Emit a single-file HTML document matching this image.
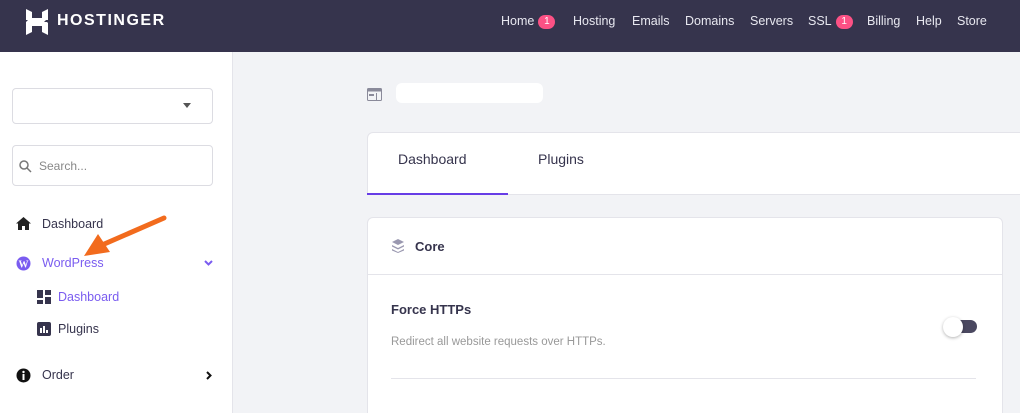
<!DOCTYPE html>
<html style="width:1020px;height:413px;overflow:hidden"><head><style>
*{margin:0;padding:0;box-sizing:border-box}
html,body{width:1020px;height:413px;overflow:hidden}
body{background:#f2f3f6;font-family:"Liberation Sans",sans-serif;position:relative}
.hdr{position:absolute;left:0;top:0;width:1020px;height:52px;background:#36344d}
.abs{position:absolute}
.nav{position:absolute;top:14px;font-size:12.5px;color:#e8e8f0;white-space:nowrap}
.badge{display:inline-block;background:#fc5185;color:#fff;border-radius:8px;width:17px;height:14px;font-size:10px;text-align:center;line-height:14px;vertical-align:1px;margin-left:4px}
.side{position:absolute;left:0;top:52px;width:233px;height:361px;background:#fff;border-right:1px solid #e4e4ea}
.box{position:absolute;border:1px solid #dcdce2;border-radius:4px;background:#fff}
.mi{position:absolute;font-size:12.5px;color:#36344d}
</style></head><body>
<div class="hdr">
 <svg class="abs" style="left:26px;top:9px" width="22" height="26" viewBox="0 0 22 26"><g fill="#fff"><path d="M0 0l6 3v8H0z"/><path d="M16 14l6 0v12l-6-3z"/><path d="M0 13h22l-4 4H0z"/><path d="M0 15v11l6-3v-8z"/><path d="M16 3l6-3v11h-6z"/><path d="M4 9h18l-4 4H0z"/></g></svg>
 <div class="abs" style="left:57px;top:12px;color:#fff;font-weight:bold;font-size:16px;letter-spacing:1.5px">HOSTINGER</div>
 <div class="nav" style="left:501px">Home<span class="badge">1</span></div>
 <div class="nav" style="left:573px">Hosting</div>
 <div class="nav" style="left:632px">Emails</div>
 <div class="nav" style="left:685px">Domains</div>
 <div class="nav" style="left:750px">Servers</div>
 <div class="nav" style="left:808px">SSL<span class="badge">1</span></div>
 <div class="nav" style="left:867px">Billing</div>
 <div class="nav" style="left:916px">Help</div>
 <div class="nav" style="left:957px">Store</div>
</div>
<div class="side"></div>
<div class="box" style="left:12px;top:88px;width:201px;height:36px"></div>
<div class="abs" style="left:183px;top:103px;width:0;height:0;border-left:4px solid transparent;border-right:4px solid transparent;border-top:5px solid #555"></div>
<div class="box" style="left:12px;top:145px;width:201px;height:41px"></div>
<svg class="abs" style="left:19px;top:160px" width="13" height="13" viewBox="0 0 13 13"><circle cx="5" cy="5" r="4" fill="none" stroke="#777" stroke-width="1.5"/><path d="M8 8l4 4" stroke="#777" stroke-width="1.5"/></svg>
<div class="abs" style="left:39px;top:159px;font-size:12px;color:#888">Search...</div>
<svg class="abs" style="left:16px;top:217px" width="15" height="13" viewBox="0 0 15 13"><path d="M7.5 0L0 6.5h2V13h4V9h3v4h4V6.5h2z" fill="#222"/></svg>
<div class="mi" style="left:42px;top:217px">Dashboard</div>
<svg class="abs" style="left:16px;top:256px" width="15" height="15" viewBox="0 0 15 15"><circle cx="7.5" cy="7.5" r="7" fill="#7a5cf0"/><text x="7.5" y="11.5" font-size="10" font-weight="bold" fill="#fff" text-anchor="middle" font-family="Liberation Serif">W</text></svg>
<div class="mi" style="left:42px;top:256px;color:#7a5cf0">WordPress</div>
<svg class="abs" style="left:204px;top:260px" width="9" height="6" viewBox="0 0 9 6"><path d="M1 1l3.5 3.5L8 1" stroke="#7a5cf0" stroke-width="2" fill="none"/></svg>
<svg class="abs" style="left:37px;top:290px" width="14" height="14" viewBox="0 0 14 14" fill="#36344d"><rect x="0" y="0" width="6" height="8"/><rect x="8" y="0" width="6" height="5"/><rect x="0" y="10" width="6" height="4"/><rect x="8" y="7" width="6" height="7"/></svg>
<div class="mi" style="left:58px;top:290px;color:#7a5cf0">Dashboard</div>
<svg class="abs" style="left:37px;top:322px" width="14" height="14" viewBox="0 0 14 14"><rect width="14" height="14" rx="2" fill="#36344d"/><rect x="3" y="6" width="2" height="5" fill="#fff"/><rect x="6" y="4" width="2" height="7" fill="#fff"/><rect x="9" y="8" width="2" height="3" fill="#fff"/></svg>
<div class="mi" style="left:58px;top:322px">Plugins</div>
<svg class="abs" style="left:16px;top:368px" width="15" height="15" viewBox="0 0 15 15"><circle cx="7.5" cy="7.5" r="7" fill="#111"/><rect x="6.5" y="6" width="2" height="6" fill="#fff"/><circle cx="7.5" cy="4" r="1.2" fill="#fff"/></svg>
<div class="mi" style="left:42px;top:368px">Order</div>
<svg class="abs" style="left:206px;top:371px" width="6" height="9" viewBox="0 0 6 9"><path d="M1 1l3.5 3.5L1 8" stroke="#111" stroke-width="2" fill="none"/></svg>
<svg class="abs" style="left:80px;top:212px" width="90" height="50" viewBox="0 0 90 50"><path d="M84 6L22 33" stroke="#f26b1d" stroke-width="5" stroke-linecap="round"/><path d="M4 44l14-22 12 18z" fill="#f26b1d"/></svg>
<svg class="abs" style="left:367px;top:88px" width="15" height="13" viewBox="0 0 15 13"><rect x="0.5" y="0.5" width="14" height="12" rx="1" fill="none" stroke="#8a8a9a"/><rect x="0.5" y="0.5" width="14" height="3" fill="#8a8a9a"/><rect x="2" y="6" width="5" height="2" fill="#8a8a9a"/><rect x="9" y="5" width="1" height="7" fill="#8a8a9a"/></svg>
<div class="abs" style="left:396px;top:83px;width:147px;height:20px;background:#fff;border-radius:6px"></div>
<div class="abs" style="left:367px;top:132px;width:660px;height:63px;background:#fff;border:1px solid #e4e4ea;border-radius:6px 0 0 0"></div>
<div class="abs" style="left:398px;top:151px;font-size:14px;color:#36344d">Dashboard</div>
<div class="abs" style="left:538px;top:151px;font-size:14px;color:#36344d">Plugins</div>
<div class="abs" style="left:367px;top:193px;width:141px;height:2px;background:#673de6"></div>
<div class="abs" style="left:367px;top:217px;width:636px;height:210px;background:#fff;border:1px solid #e4e4ea;border-radius:6px"></div>
<div class="abs" style="left:367px;top:274px;width:636px;height:1px;background:#e4e4ea"></div>
<svg class="abs" style="left:392px;top:239px" width="12" height="14" viewBox="0 0 12 14" fill="#9a98b0"><path d="M6 0l6 3-6 3-6-3z"/><path d="M0 6l6 3 6-3v1.5l-6 3-6-3z"/><path d="M0 10l6 3 6-3v1.5l-6 2.5-6-2.5z"/></svg>
<div class="abs" style="left:415px;top:239px;font-size:13px;font-weight:bold;color:#36344d">Core</div>
<div class="abs" style="left:391px;top:302px;font-size:13px;font-weight:bold;color:#36344d">Force HTTPs</div>
<div class="abs" style="left:391px;top:336px;font-size:11.5px;color:#999">Redirect all website requests over HTTPs.</div>
<div class="abs" style="left:948px;top:320px;width:29px;height:13px;border-radius:7px;background:#4a4860"></div>
<div class="abs" style="left:943px;top:317px;width:20px;height:20px;border-radius:10px;background:#fff;box-shadow:0 1px 3px rgba(0,0,0,.3)"></div>
<div class="abs" style="left:391px;top:378px;width:585px;height:1px;background:#e4e4ea"></div>
</body></html>
